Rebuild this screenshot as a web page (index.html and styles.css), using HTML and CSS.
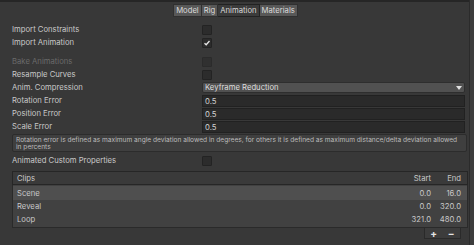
FILE: index.html
```html
<!doctype html>
<html lang="en">
<head>
  <meta charset="UTF-8">
  <title>Animation Import Settings</title>
  <link rel="stylesheet" href="styles.css">
</head>
<body>
  <div class="inspector">
    <div class="topbar"></div>
    <div class="tabs">
      <div class="tab">Model</div>
      <div class="tab">Rig</div>
      <div class="tab active">Animation</div>
      <div class="tab">Materials</div>
    </div>

    <div class="fields">
      <div class="row">
        <span class="label">Import Constraints</span>
        <span class="check"></span>
      </div>
      <div class="row">
        <span class="label">Import Animation</span>
        <span class="check">
          <svg width="8" height="8" viewBox="0 0 8 8"><polyline points="1.5,4.2 3.2,5.8 6.5,2" fill="none" stroke="#e6e6e6" stroke-width="1.3"/></svg>
        </span>
      </div>

      <div class="row spaced disabled">
        <span class="label">Bake Animations</span>
        <span class="check"></span>
      </div>
      <div class="row">
        <span class="label">Resample Curves</span>
        <span class="check"></span>
      </div>
      <div class="row">
        <span class="label">Anim. Compression</span>
        <div class="dropdown">
          <span>Keyframe Reduction</span>
          <svg width="6" height="4" viewBox="0 0 6 4"><polygon points="0,0 6,0 3,4" fill="#e0e0e0"/></svg>
        </div>
      </div>
      <div class="row">
        <span class="label">Rotation Error</span>
        <div class="input">0.5</div>
      </div>
      <div class="row">
        <span class="label">Position Error</span>
        <div class="input">0.5</div>
      </div>
      <div class="row">
        <span class="label">Scale Error</span>
        <div class="input">0.5</div>
      </div>
    </div>

    <div class="helpbox">Rotation error is defined as maximum angle deviation allowed in degrees, for others it is defined as maximum distance/delta deviation allowed in percents</div>

    <div class="fields">
      <div class="row">
        <span class="label">Animated Custom Properties</span>
        <span class="check"></span>
      </div>
    </div>

    <div class="clips">
      <div class="clips-head">
        <span class="name">Clips</span>
        <span class="num">Start</span>
        <span class="num">End</span>
      </div>
      <div class="clips-body">
        <div class="clip selected">
          <span class="name">Scene</span>
          <span class="num">0.0</span>
          <span class="num">16.0</span>
        </div>
        <div class="clip">
          <span class="name">Reveal</span>
          <span class="num">0.0</span>
          <span class="num">320.0</span>
        </div>
        <div class="clip">
          <span class="name">Loop</span>
          <span class="num">321.0</span>
          <span class="num">480.0</span>
        </div>
      </div>
      <div class="clips-foot">
        <span class="btn">+</span>
        <span class="btn">&minus;</span>
      </div>
    </div>
  </div>
</body>
</html>
```

FILE: styles.css
```css
body {
  margin: 0;
  background: #3d3d3d;
  color: #c8c8c8;
  font-family: Inter, "Noto Sans", sans-serif;
  font-size: 7.7px;
}
.inspector {
  width: 470px;
  height: 245px;
  background: #383838;
  border-right: 1px solid #2b2b2b;
  box-sizing: border-box;
}
.topbar {
  height: 2px;
  background: #262626;
}
.tabs {
  display: flex;
  justify-content: center;
  margin-top: 2px;
  height: 13px;
  padding-left: 2px;
}
.tab {
  display: flex;
  align-items: center;
  padding: 0 2px;
  background: #585858;
  color: #dadada;
  border: 1px solid #303030;
  border-left: none;
}
.tab:first-child {
  border-left: 1px solid #303030;
}
.tab.active {
  background: #3b3b3b;
  border-color: #222;
  color: #d8d8d8;
}
.fields {
  padding: 0 4px 0 12px;
}
.tabs + .fields {
  margin-top: 6px;
}
.row {
  display: flex;
  align-items: center;
  height: 13px;
}
.row.spaced {
  margin-top: 6px;
}
.row.disabled .label {
  color: #6a6a6a;
}
.row.disabled .check {
  opacity: 0.6;
}
.label {
  width: 190px;
  flex-shrink: 0;
  white-space: nowrap;
}
.check {
  width: 10px;
  height: 10px;
  box-sizing: border-box;
  background: #2c2c2c;
  border: 1px solid #232323;
  border-radius: 1px;
  display: flex;
  align-items: center;
  justify-content: center;
}
.dropdown {
  flex: 1;
  height: 11px;
  box-sizing: border-box;
  background: #515151;
  border: 1px solid #2e2e2e;
  border-radius: 2px;
  display: flex;
  align-items: center;
  justify-content: space-between;
  padding: 0 2px 0 2px;
  color: #dedede;
}
.input {
  flex: 1;
  height: 12px;
  box-sizing: border-box;
  background: #2a2a2a;
  border: 1px solid #212121;
  display: flex;
  align-items: center;
  padding-left: 2px;
  color: #d2d2d2;
  margin-top: 1px;
}
.helpbox {
  margin: 1px 2px 2px 12px;
  height: 18px;
  box-sizing: border-box;
  padding: 2px 4px 2px 3px;
  background: #3f3f3f;
  border: 1px solid #2c2c2c;
  border-radius: 2px;
  font-size: 6.6px;
  line-height: 7px;
  color: #bcbcbc;
}
.clips {
  margin: 4px 1px 0 12px;
}
.clips-head, .clip {
  display: flex;
  align-items: center;
  padding: 0 6px 0 4px;
}
.clips-head {
  height: 14px;
  box-sizing: border-box;
  background: #3a3a3a;
  border: 1px solid #262626;
}
.clips-body {
  background: #414141;
  border: 1px solid #2a2a2a;
  border-top: none;
  padding: 1px 0 1px;
}
.clip {
  height: 13px;
  padding-left: 4px;
}
.clip.selected {
  background: #4f4f4f;
  height: 14px;
}
.name {
  flex: 1;
}
.num {
  width: 30px;
  text-align: right;
}
.clips-foot {
  display: flex;
  justify-content: space-around;
  align-items: center;
  width: 37px;
  height: 11px;
  margin: 0 7px 0 auto;
  background: #3c3c3c;
  border: 1px solid #2a2a2a;
  border-top: none;
  box-sizing: border-box;
}
.btn {
  color: #e4e4e4;
  font-size: 10px;
  font-weight: 700;
  line-height: 10px;
}
```
